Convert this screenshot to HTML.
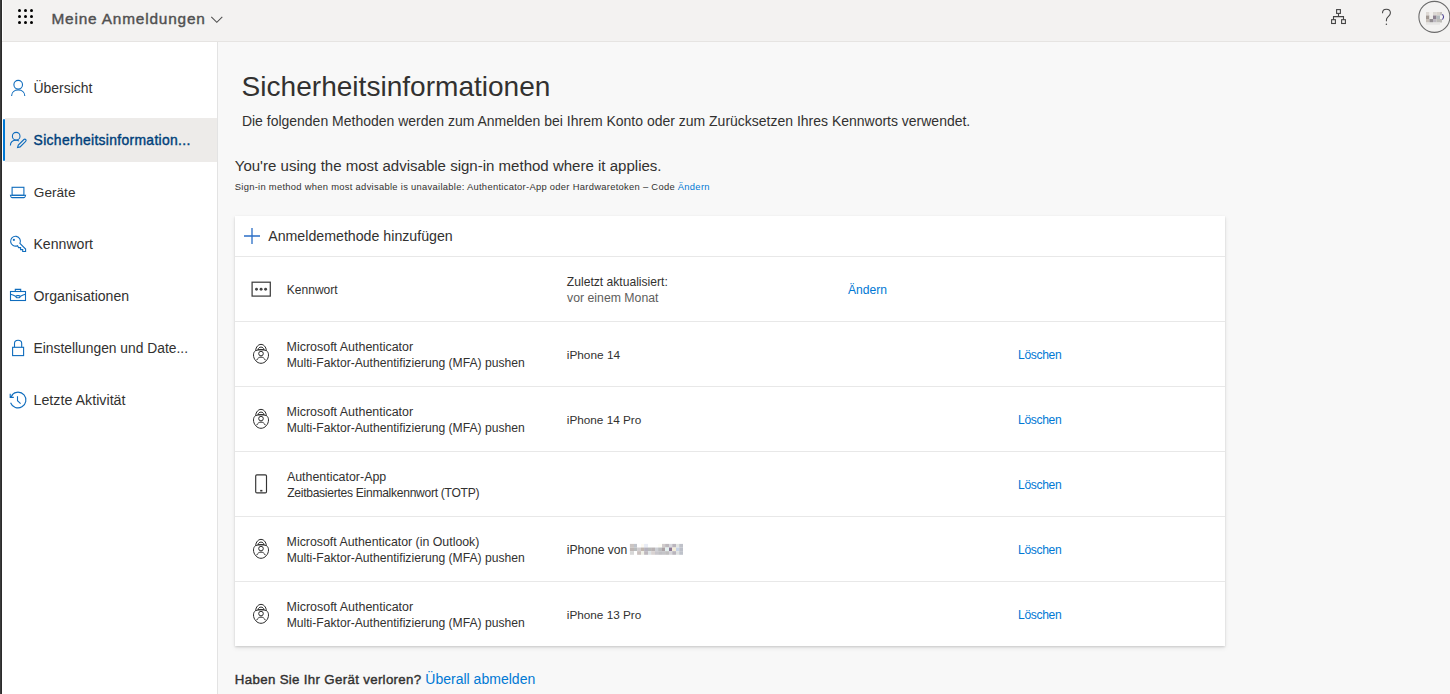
<!DOCTYPE html>
<html><head><meta charset="utf-8"><style>
html,body{margin:0;padding:0;width:1450px;height:694px;overflow:hidden;background:#f8f8f8}
.t{position:absolute;white-space:nowrap;font-family:"Liberation Sans", sans-serif}
</style></head><body>
<div style="position:absolute;left:0px;top:0px;width:1450px;height:694px;background:#f8f8f8"></div>
<div style="position:absolute;left:0px;top:0px;width:1450px;height:41px;background:#f3f2f1"></div>
<div style="position:absolute;left:0px;top:41px;width:1450px;height:1px;background:#e6e4e2"></div>
<div style="position:absolute;left:2px;top:42px;width:215px;height:652px;background:#ffffff"></div>
<div style="position:absolute;left:217px;top:42px;width:1px;height:652px;background:#e3e3e3"></div>
<div style="position:absolute;left:0px;top:0px;width:1px;height:694px;background:#3b3b3b"></div>
<div style="position:absolute;left:1px;top:0px;width:1px;height:694px;background:#2b2b2b"></div>
<div style="position:absolute;left:2px;top:0px;width:1px;height:41px;background:#ffffff"></div>
<svg style="position:absolute;left:0px;top:0px;overflow:visible" width="40" height="40"><circle cx="19.5" cy="10.4" r="1.5" fill="#000"/><circle cx="19.5" cy="16.4" r="1.5" fill="#000"/><circle cx="19.5" cy="22.4" r="1.5" fill="#000"/><circle cx="25.5" cy="10.4" r="1.5" fill="#000"/><circle cx="25.5" cy="16.4" r="1.5" fill="#000"/><circle cx="25.5" cy="22.4" r="1.5" fill="#000"/><circle cx="31.5" cy="10.4" r="1.5" fill="#000"/><circle cx="31.5" cy="16.4" r="1.5" fill="#000"/><circle cx="31.5" cy="22.4" r="1.5" fill="#000"/></svg>
<div class="t" style="left:51.47px;top:11.00px;font-size:15.4px;line-height:15.4px;color:#505050;font-weight:400;letter-spacing:0.816px;-webkit-text-stroke:0.4px #505050">Meine Anmeldungen</div>
<svg style="position:absolute;left:0px;top:0px;overflow:visible" width="240" height="40"><path d="M211.3 16.8 L216.8 22.3 L222.3 16.8" fill="none" stroke="#505050" stroke-width="1.1"/></svg>
<svg style="position:absolute;left:0px;top:0px;overflow:visible" width="1450" height="40"><g fill="none" stroke="#444" stroke-width="1.1"><rect x="1336.6" y="9.6" width="3.8" height="3.8"/><rect x="1331.6" y="19.7" width="3.8" height="3.8"/><rect x="1341.6" y="19.7" width="3.8" height="3.8"/><path d="M1338.5 13.4 V16.6 M1333.5 19.7 V16.6 H1343.5 V19.7"/></g></svg>
<svg style="position:absolute;left:0px;top:0px;overflow:visible" width="1450" height="40"><path d="M1382.5 13.2 C1382.5 10.6 1384.4 9.3 1386.4 9.3 C1388.6 9.3 1390.4 10.8 1390.4 13 C1390.4 15.1 1389 16 1387.8 17.1 C1386.9 17.9 1386.4 18.7 1386.4 20.2 V21.2" fill="none" stroke="#444" stroke-width="1.05"/><circle cx="1386.4" cy="24.2" r="0.75" fill="#444"/></svg>
<svg style="position:absolute;left:0px;top:0px;overflow:visible" width="1450" height="40"><circle cx="1434.4" cy="16.9" r="15.5" fill="none" stroke="#6b6b6b" stroke-width="1.1"/><rect x="1426" y="12" width="3.5" height="3.5" fill="#ddd8d3"/><rect x="1429.5" y="12" width="3.5" height="3.5" fill="#f1efed"/><rect x="1433" y="12" width="3.5" height="3.5" fill="#dbd8d4"/><rect x="1436.5" y="12" width="3.5" height="3.5" fill="#d8d2cc"/><rect x="1440" y="12" width="2" height="3.5" fill="#c2c0be"/><rect x="1426" y="15.5" width="3.5" height="3.5" fill="#a39a94"/><rect x="1429.5" y="15.5" width="3.5" height="3.5" fill="#ecebe9"/><rect x="1433" y="15.5" width="3.5" height="3.5" fill="#8d8290"/><rect x="1436.5" y="15.5" width="3.5" height="3.5" fill="#b3babd"/><rect x="1440" y="15.5" width="2" height="3.5" fill="#f5f5f5"/><rect x="1426" y="19" width="3.5" height="3.5" fill="#c7bfb8"/><rect x="1429.5" y="19" width="3.5" height="3.5" fill="#938e92"/><rect x="1433" y="19" width="3.5" height="3.5" fill="#bdb9c1"/><rect x="1436.5" y="19" width="5.5" height="3.5" fill="#bdbcb8"/><rect x="1426" y="22.5" width="14" height="2.3" fill="#e6e5e4"/><path d="M1442.6 14.2 Q1444.6 16.9 1442.6 19.6" fill="none" stroke="#3a2f8a" stroke-width="1"/></svg>
<div class="t" style="left:33.38px;top:81.00px;font-size:13.986px;line-height:13.986px;color:#323130;font-weight:400;">Übersicht</div>
<div style="position:absolute;left:5px;top:118px;width:212px;height:44px;background:#edebe9"></div>
<div style="position:absolute;left:3px;top:119px;width:2px;height:42px;background:#0078d4;border-radius:1px"></div>
<div class="t" style="left:33.61px;top:134.00px;font-size:13.9px;line-height:13.9px;color:#003f7a;font-weight:400;letter-spacing:0.321px;-webkit-text-stroke:0.4px #003f7a">Sicherheitsinformation...</div>
<div class="t" style="left:33.82px;top:186.00px;font-size:13.649px;line-height:13.649px;color:#323130;font-weight:400;">Geräte</div>
<div class="t" style="left:33.47px;top:237.00px;font-size:14.106px;line-height:14.106px;color:#323130;font-weight:400;">Kennwort</div>
<div class="t" style="left:33.60px;top:289.00px;font-size:14.093px;line-height:14.093px;color:#323130;font-weight:400;">Organisationen</div>
<div class="t" style="left:33.49px;top:342.00px;font-size:13.845px;line-height:13.845px;color:#323130;font-weight:400;">Einstellungen und Date...</div>
<div class="t" style="left:33.46px;top:393.00px;font-size:14.292px;line-height:14.292px;color:#323130;font-weight:400;">Letzte Aktivität</div>
<svg style="position:absolute;left:0px;top:0px;overflow:visible" width="40" height="420"><g fill="none" stroke="#0f6cbd" stroke-width="1.1"><circle cx="18.2" cy="84.7" r="4.3"/><path d="M11.6 96 C11.6 92.3 14.5 89.9 18.2 89.9 C21.9 89.9 24.8 92.3 24.8 96"/></g><g fill="none" stroke="#0f6cbd" stroke-width="1.1"><circle cx="16.2" cy="136.2" r="3.8"/><path d="M10.4 145.6 C10.4 142.2 12.9 140.3 16.2 140.3 C17.3 140.3 18.2 140.5 19 140.9"/><path d="M17.6 147.5 L18.3 145.1 L23.9 139.5 C24.4 139 25.2 139 25.7 139.5 C26.2 140 26.2 140.8 25.7 141.3 L20.1 146.9 Z"/></g><g fill="none" stroke="#0f6cbd" stroke-width="1.1"><rect x="12.1" y="187.3" width="11.8" height="8" /><path d="M10.5 195.3 H25.5 L25 196.9 C24.8 197.4 24.5 197.6 24 197.6 H12 C11.5 197.6 11.2 197.4 11 196.9 Z"/></g><g fill="none" stroke="#0f6cbd" stroke-width="1.1"><path d="M19.9 243.4 L25.6 249.1 V251.5 H22.7 V249.6 H20.6 V247.6 H18.6 L17.5 245.7 A4.9 4.9 0 1 1 19.9 243.4 Z"/></g><rect x="12.9" y="238.9" width="1.9" height="1.9" fill="#0f6cbd"/><g fill="none" stroke="#0f6cbd" stroke-width="1.1"><rect x="10.5" y="291.5" width="15" height="9" /><path d="M15.3 291.5 V289.4 H20.7 V291.5"/><path d="M10.5 294.2 C12.5 294.6 14.2 295.5 16 296.5 M20 296.5 C21.8 295.5 23.5 294.6 25.5 294.2"/><rect x="16" y="295.6" width="4" height="2.1" rx="1"/></g><g fill="none" stroke="#0f6cbd" stroke-width="1.1"><rect x="12.6" y="347.3" width="11" height="8.3"/><path d="M14.5 347.3 V343.5 C14.5 341.5 16 340.3 18.1 340.3 C20.2 340.3 21.7 341.5 21.7 343.5 V347.3"/></g><g fill="none" stroke="#0f6cbd" stroke-width="1.1"><path d="M11.95 394.9 A7.9 7.9 0 1 1 10.58 402.7"/><path d="M17.5 396.3 V400.7 L20.6 403.7"/><path d="M10.2 393.8 V397.4 H13.8 M10.2 397.4 L12.6 395"/></g></svg>
<div class="t" style="left:241.60px;top:73.00px;font-size:28.072px;line-height:28.072px;color:#323130;font-weight:400;">Sicherheitsinformationen</div>
<div class="t" style="left:241.88px;top:114.00px;font-size:13.995px;line-height:13.995px;color:#323130;font-weight:400;">Die folgenden Methoden werden zum Anmelden bei Ihrem Konto oder zum Zurücksetzen Ihres Kennworts verwendet.</div>
<div class="t" style="left:234.75px;top:158.00px;font-size:15.048px;line-height:15.048px;color:#323130;font-weight:400;">You're using the most advisable sign-in method where it applies.</div>
<div class="t" style="left:234.73px;top:182.00px;font-size:9.4px;line-height:9.4px;color:#323130;font-weight:400;letter-spacing:0.292px">Sign-in method when most advisable is unavailable: Authenticator-App oder Hardwaretoken – Code <span style="color:#0078d4">Ändern</span></div>
<div style="position:absolute;left:235px;top:216px;width:990px;height:430px;background:#fff;box-shadow:0 1px 2px rgba(0,0,0,.14),0 2px 5px rgba(0,0,0,.08)"></div>
<svg style="position:absolute;left:0px;top:0px;overflow:visible" width="1450" height="694"><path d="M252 228 V244 M244 236 H260" stroke="#2a6ec6" stroke-width="1.3" fill="none"/></svg>
<div class="t" style="left:268.20px;top:229.00px;font-size:14.204px;line-height:14.204px;color:#323130;font-weight:400;">Anmeldemethode hinzufügen</div>
<div style="position:absolute;left:235px;top:256px;width:990px;height:1px;background:#e8e8e8"></div>
<div style="position:absolute;left:235px;top:321px;width:990px;height:1px;background:#e8e8e8"></div>
<div class="t" style="left:286.73px;top:284.00px;font-size:12.077px;line-height:12.077px;color:#323130;font-weight:400;">Kennwort</div>
<div class="t" style="left:566.84px;top:276.00px;font-size:12.119px;line-height:12.119px;color:#323130;font-weight:400;">Zuletzt aktualisiert:</div>
<div class="t" style="left:567.08px;top:292.00px;font-size:12.288px;line-height:12.288px;color:#605e5c;font-weight:400;">vor einem Monat</div>
<div class="t" style="left:848.00px;top:284.00px;font-size:12.12px;line-height:12.12px;color:#0078d4;font-weight:400;">Ändern</div>
<div style="position:absolute;left:235px;top:386px;width:990px;height:1px;background:#e8e8e8"></div>
<div class="t" style="left:286.60px;top:341.00px;font-size:12.453px;line-height:12.453px;color:#323130;font-weight:400;">Microsoft Authenticator</div>
<div class="t" style="left:286.63px;top:357.00px;font-size:12.157px;line-height:12.157px;color:#323130;font-weight:400;">Multi-Faktor-Authentifizierung (MFA) pushen</div>
<div class="t" style="left:566.77px;top:350.00px;font-size:11.841px;line-height:11.841px;color:#323130;font-weight:400;">iPhone 14</div>
<div class="t" style="left:1018.04px;top:349.00px;font-size:12.1px;line-height:12.1px;color:#0078d4;font-weight:400;letter-spacing:-0.341px;">Löschen</div>
<div style="position:absolute;left:235px;top:451px;width:990px;height:1px;background:#e8e8e8"></div>
<div class="t" style="left:286.60px;top:406.00px;font-size:12.453px;line-height:12.453px;color:#323130;font-weight:400;">Microsoft Authenticator</div>
<div class="t" style="left:286.63px;top:422.00px;font-size:12.157px;line-height:12.157px;color:#323130;font-weight:400;">Multi-Faktor-Authentifizierung (MFA) pushen</div>
<div class="t" style="left:566.78px;top:414.00px;font-size:11.782px;line-height:11.782px;color:#323130;font-weight:400;">iPhone 14 Pro</div>
<div class="t" style="left:1018.04px;top:414.00px;font-size:12.1px;line-height:12.1px;color:#0078d4;font-weight:400;letter-spacing:-0.341px;">Löschen</div>
<div style="position:absolute;left:235px;top:516px;width:990px;height:1px;background:#e8e8e8"></div>
<div class="t" style="left:286.90px;top:471.00px;font-size:12.412px;line-height:12.412px;color:#323130;font-weight:400;">Authenticator-App</div>
<div class="t" style="left:287.23px;top:487.00px;font-size:12.1px;line-height:12.1px;color:#323130;font-weight:400;letter-spacing:-0.288px;">Zeitbasiertes Einmalkennwort (TOTP)</div>
<div class="t" style="left:1018.04px;top:479.00px;font-size:12.1px;line-height:12.1px;color:#0078d4;font-weight:400;letter-spacing:-0.341px;">Löschen</div>
<div style="position:absolute;left:235px;top:581px;width:990px;height:1px;background:#e8e8e8"></div>
<div class="t" style="left:286.61px;top:536.00px;font-size:12.358px;line-height:12.358px;color:#323130;font-weight:400;">Microsoft Authenticator (in Outlook)</div>
<div class="t" style="left:286.63px;top:552.00px;font-size:12.157px;line-height:12.157px;color:#323130;font-weight:400;">Multi-Faktor-Authentifizierung (MFA) pushen</div>
<div class="t" style="left:566.75px;top:544.00px;font-size:12.115px;line-height:12.115px;color:#323130;font-weight:400;">iPhone von</div>
<div class="t" style="left:1018.04px;top:544.00px;font-size:12.1px;line-height:12.1px;color:#0078d4;font-weight:400;letter-spacing:-0.341px;">Löschen</div>
<div class="t" style="left:286.60px;top:601.00px;font-size:12.453px;line-height:12.453px;color:#323130;font-weight:400;">Microsoft Authenticator</div>
<div class="t" style="left:286.63px;top:617.00px;font-size:12.157px;line-height:12.157px;color:#323130;font-weight:400;">Multi-Faktor-Authentifizierung (MFA) pushen</div>
<div class="t" style="left:566.78px;top:609.00px;font-size:11.782px;line-height:11.782px;color:#323130;font-weight:400;">iPhone 13 Pro</div>
<div class="t" style="left:1018.04px;top:609.00px;font-size:12.1px;line-height:12.1px;color:#0078d4;font-weight:400;letter-spacing:-0.341px;">Löschen</div>
<svg style="position:absolute;left:0px;top:0px;overflow:visible" width="1450" height="694"><rect x="252.1" y="282.2" width="18.2" height="13.9" fill="none" stroke="#3f3f3f" stroke-width="1.25"/><circle cx="256.5" cy="289.3" r="1.45" fill="#444"/><circle cx="261.1" cy="289.3" r="1.45" fill="#444"/><circle cx="265.6" cy="289.3" r="1.45" fill="#444"/><g fill="none" stroke="#2b2b2b" stroke-width="1" transform="translate(253,344)"><path d="M2.6 6.6 C3 2.9 5.2 0.4 8 0.4 C10.8 0.4 13 2.9 13.4 6.6"/><path d="M4.9 5.7 C5.3 4.1 6.5 3.1 8 3.1 C9.5 3.1 10.7 4.1 11.1 5.7 Z"/><path d="M2.6 6.6 C1.2 7.6 0.5 9.1 0.5 10.9 C0.5 15.3 3.9 19.3 8 19.3 C12.1 19.3 15.5 15.3 15.5 10.9 C15.5 9.1 14.8 7.6 13.4 6.6 C11.5 6 9.8 5.7 8 5.7 C6.2 5.7 4.5 6 2.6 6.6 Z"/><circle cx="8" cy="9.6" r="2.3"/><path d="M3.6 16.3 C4.6 14.2 6.1 13.1 8 13.1 C9.9 13.1 11.4 14.2 12.4 16.3"/></g><g fill="none" stroke="#2b2b2b" stroke-width="1" transform="translate(253,409)"><path d="M2.6 6.6 C3 2.9 5.2 0.4 8 0.4 C10.8 0.4 13 2.9 13.4 6.6"/><path d="M4.9 5.7 C5.3 4.1 6.5 3.1 8 3.1 C9.5 3.1 10.7 4.1 11.1 5.7 Z"/><path d="M2.6 6.6 C1.2 7.6 0.5 9.1 0.5 10.9 C0.5 15.3 3.9 19.3 8 19.3 C12.1 19.3 15.5 15.3 15.5 10.9 C15.5 9.1 14.8 7.6 13.4 6.6 C11.5 6 9.8 5.7 8 5.7 C6.2 5.7 4.5 6 2.6 6.6 Z"/><circle cx="8" cy="9.6" r="2.3"/><path d="M3.6 16.3 C4.6 14.2 6.1 13.1 8 13.1 C9.9 13.1 11.4 14.2 12.4 16.3"/></g><rect x="255.7" y="474.8" width="10.8" height="18.1" rx="1.2" fill="none" stroke="#333" stroke-width="1.15"/><rect x="260.2" y="489.9" width="2.2" height="1.6" fill="#333"/><g fill="none" stroke="#2b2b2b" stroke-width="1" transform="translate(253,539)"><path d="M2.6 6.6 C3 2.9 5.2 0.4 8 0.4 C10.8 0.4 13 2.9 13.4 6.6"/><path d="M4.9 5.7 C5.3 4.1 6.5 3.1 8 3.1 C9.5 3.1 10.7 4.1 11.1 5.7 Z"/><path d="M2.6 6.6 C1.2 7.6 0.5 9.1 0.5 10.9 C0.5 15.3 3.9 19.3 8 19.3 C12.1 19.3 15.5 15.3 15.5 10.9 C15.5 9.1 14.8 7.6 13.4 6.6 C11.5 6 9.8 5.7 8 5.7 C6.2 5.7 4.5 6 2.6 6.6 Z"/><circle cx="8" cy="9.6" r="2.3"/><path d="M3.6 16.3 C4.6 14.2 6.1 13.1 8 13.1 C9.9 13.1 11.4 14.2 12.4 16.3"/></g><g fill="none" stroke="#2b2b2b" stroke-width="1" transform="translate(253,604)"><path d="M2.6 6.6 C3 2.9 5.2 0.4 8 0.4 C10.8 0.4 13 2.9 13.4 6.6"/><path d="M4.9 5.7 C5.3 4.1 6.5 3.1 8 3.1 C9.5 3.1 10.7 4.1 11.1 5.7 Z"/><path d="M2.6 6.6 C1.2 7.6 0.5 9.1 0.5 10.9 C0.5 15.3 3.9 19.3 8 19.3 C12.1 19.3 15.5 15.3 15.5 10.9 C15.5 9.1 14.8 7.6 13.4 6.6 C11.5 6 9.8 5.7 8 5.7 C6.2 5.7 4.5 6 2.6 6.6 Z"/><circle cx="8" cy="9.6" r="2.3"/><path d="M3.6 16.3 C4.6 14.2 6.1 13.1 8 13.1 C9.9 13.1 11.4 14.2 12.4 16.3"/></g></svg>
<svg style="position:absolute;left:0px;top:0px;overflow:visible" width="1450" height="694"><rect x="629.9" y="543.90" width="4.10" height="3.63" fill="#cbc5c3"/><rect x="634.0" y="543.90" width="3.10" height="3.63" fill="#c0c4cc"/><rect x="637.1" y="543.90" width="3.90" height="3.63" fill="#ffffff"/><rect x="641.0" y="543.90" width="3.10" height="3.63" fill="#fdfaf3"/><rect x="644.1" y="543.90" width="3.90" height="3.63" fill="#e8ecf5"/><rect x="648.0" y="543.90" width="3.10" height="3.63" fill="#ffffff"/><rect x="651.1" y="543.90" width="3.90" height="3.63" fill="#ffffff"/><rect x="655.0" y="543.90" width="3.10" height="3.63" fill="#ffffff"/><rect x="658.1" y="543.90" width="3.90" height="3.63" fill="#fdfdf6"/><rect x="662.0" y="543.90" width="3.10" height="3.63" fill="#d0cccc"/><rect x="665.1" y="543.90" width="3.90" height="3.63" fill="#bdb8bd"/><rect x="669.0" y="543.90" width="3.20" height="3.63" fill="#d7d8dc"/><rect x="672.2" y="543.90" width="3.80" height="3.63" fill="#bab5bd"/><rect x="676.0" y="543.90" width="3.20" height="3.63" fill="#e2e5e2"/><rect x="679.2" y="543.90" width="3.80" height="3.63" fill="#bfc1c9"/><rect x="629.9" y="547.53" width="4.10" height="3.63" fill="#beb6b4"/><rect x="634.0" y="547.53" width="3.10" height="3.63" fill="#b8bcbd"/><rect x="637.1" y="547.53" width="3.90" height="3.63" fill="#d0cdcf"/><rect x="641.0" y="547.53" width="3.10" height="3.63" fill="#c0b6ae"/><rect x="644.1" y="547.53" width="3.90" height="3.63" fill="#b4b2bd"/><rect x="648.0" y="547.53" width="3.10" height="3.63" fill="#b7b9b9"/><rect x="651.1" y="547.53" width="3.90" height="3.63" fill="#b8b2b3"/><rect x="655.0" y="547.53" width="3.10" height="3.63" fill="#cccfd4"/><rect x="658.1" y="547.53" width="3.90" height="3.63" fill="#babbbe"/><rect x="662.0" y="547.53" width="3.10" height="3.63" fill="#aba1a4"/><rect x="665.1" y="547.53" width="3.90" height="3.63" fill="#e2f0ef"/><rect x="669.0" y="547.53" width="3.20" height="3.63" fill="#8b7896"/><rect x="672.2" y="547.53" width="3.80" height="3.63" fill="#f3ecd6"/><rect x="676.0" y="547.53" width="3.20" height="3.63" fill="#c7d3e6"/><rect x="679.2" y="547.53" width="3.80" height="3.63" fill="#bcbfc8"/><rect x="629.9" y="551.16" width="4.10" height="3.63" fill="#d7d7d7"/><rect x="634.0" y="551.16" width="3.10" height="3.63" fill="#ffffff"/><rect x="637.1" y="551.16" width="3.90" height="3.63" fill="#cbc1bf"/><rect x="641.0" y="551.16" width="3.10" height="3.63" fill="#eff0e6"/><rect x="644.1" y="551.16" width="3.90" height="3.63" fill="#bdb7bd"/><rect x="648.0" y="551.16" width="3.10" height="3.63" fill="#dde3e6"/><rect x="651.1" y="551.16" width="3.90" height="3.63" fill="#d8d2d1"/><rect x="655.0" y="551.16" width="3.10" height="3.63" fill="#c8c6cc"/><rect x="658.1" y="551.16" width="3.90" height="3.63" fill="#c0c0c4"/><rect x="662.0" y="551.16" width="3.10" height="3.63" fill="#c4c4c8"/><rect x="665.1" y="551.16" width="3.90" height="3.63" fill="#bfbebf"/><rect x="669.0" y="551.16" width="3.20" height="3.63" fill="#d6d6da"/><rect x="672.2" y="551.16" width="3.80" height="3.63" fill="#b9b5bc"/><rect x="676.0" y="551.16" width="3.20" height="3.63" fill="#dfe2e2"/><rect x="679.2" y="551.16" width="3.80" height="3.63" fill="#bec2ca"/></svg>
<div class="t" style="left:234.83px;top:673.00px;font-size:13.3px;line-height:13.3px;color:#323130;font-weight:400;letter-spacing:0.3206px;-webkit-text-stroke:0.4px #323130">Haben Sie Ihr Gerät verloren?</div>
<div class="t" style="left:425.28px;top:672.00px;font-size:14.044px;line-height:14.044px;color:#0078d4;font-weight:400;">Überall abmelden</div>
</body></html>
